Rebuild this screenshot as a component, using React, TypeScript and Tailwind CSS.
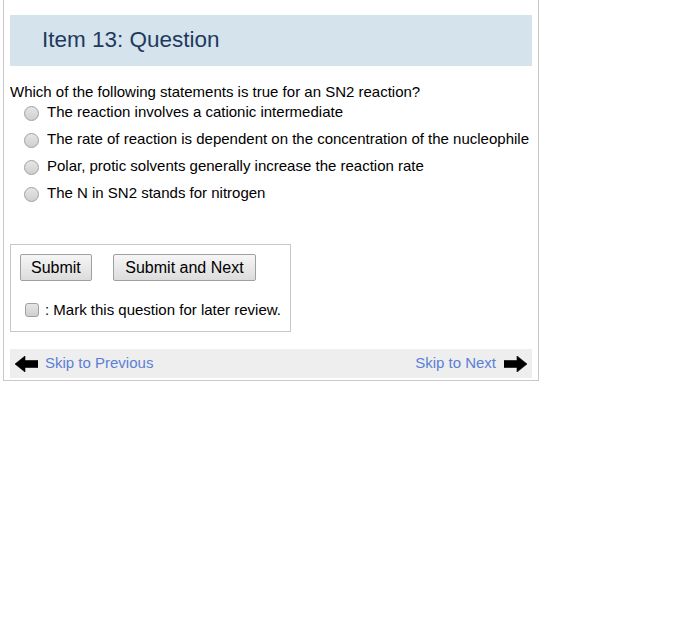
import { useState } from 'react'

const options = [
  'The reaction involves a cationic intermediate',
  'The rate of reaction is dependent on the concentration of the nucleophile',
  'Polar, protic solvents generally increase the reaction rate',
  'The N in SN2 stands for nitrogen',
]

function Arrow({ dir }: { dir: 'left' | 'right' }) {
  return (
    <svg width="23" height="16" viewBox="0 0 23 16" className={dir === 'left' ? '' : 'rotate-180'}>
      <path d="M0 8 L10 0 L10 4.5 L23 4.5 L23 11.5 L10 11.5 L10 16 Z" fill="#000" stroke="#000" strokeWidth="0.6" strokeLinejoin="round" />
    </svg>
  )
}

export default function App() {
  const [marked] = useState(false)

  return (
    <div className="font-['Liberation_Sans',Arial,sans-serif] text-black">
      <div className="ml-[3px] w-[536px] border border-t-0 border-[#c8c8c8] px-[6px] pt-[15px] pb-[2px]">
        <div className="h-[51px] bg-[#d5e3ed] pl-[32px] flex items-center">
          <h1 className="text-[22.5px] text-[#1f3a5c] leading-none">Item 13: Question</h1>
        </div>

        <p className="mt-[17px] text-[15px] leading-[18px]">
          Which of the following statements is true for an SN2 reaction?
        </p>
        <div className="mt-[2px] flex flex-col gap-[9px] pl-[14px]">
          {options.map((opt) => (
            <label key={opt} className="flex items-center h-[18px] gap-[8px] text-[15px] leading-[18px]">
              <span className="mt-[3px] w-[15px] h-[15px] rounded-full border border-[#a0a0a0] bg-gradient-to-b from-[#e6e6e6] to-[#cfcfcf]" />
              <span>{opt}</span>
            </label>
          ))}
        </div>

        <div className="mt-[42px] w-[281px] border border-[#c8c8c8] px-[9px] pt-[9px] pb-[12px]">
          <div className="flex gap-[21px]">
            <button className="h-[27px] px-[10px] text-[16px] border border-[#a0a0a0] rounded-[2px] bg-gradient-to-b from-[#f6f6f6] to-[#dcdcdc]">
              Submit
            </button>
            <button className="h-[27px] px-[11.5px] text-[16px] border border-[#a0a0a0] rounded-[2px] bg-gradient-to-b from-[#f6f6f6] to-[#dcdcdc]">
              Submit and Next
            </button>
          </div>
          <label className="mt-[20px] ml-[5px] flex items-center h-[18px] gap-[6px] text-[15px] leading-[18px]">
            <span
              className={`w-[14px] h-[14px] rounded-[3px] border border-[#a0a0a0] bg-gradient-to-b from-[#e6e6e6] to-[#cfcfcf] ${marked ? 'bg-blue-500' : ''}`}
            />
            <span>: Mark this question for later review.</span>
          </label>
        </div>

        <div className="mt-[17px] h-[29px] bg-[#eeeeee] flex items-center justify-between px-[5px] text-[15px] text-[#5a7fd6]">
          <div className="flex items-center gap-[7px]">
            <Arrow dir="left" />
            <span>Skip to Previous</span>
          </div>
          <div className="flex items-center gap-[8px]">
            <span>Skip to Next</span>
            <Arrow dir="right" />
          </div>
        </div>
      </div>
    </div>
  )
}
